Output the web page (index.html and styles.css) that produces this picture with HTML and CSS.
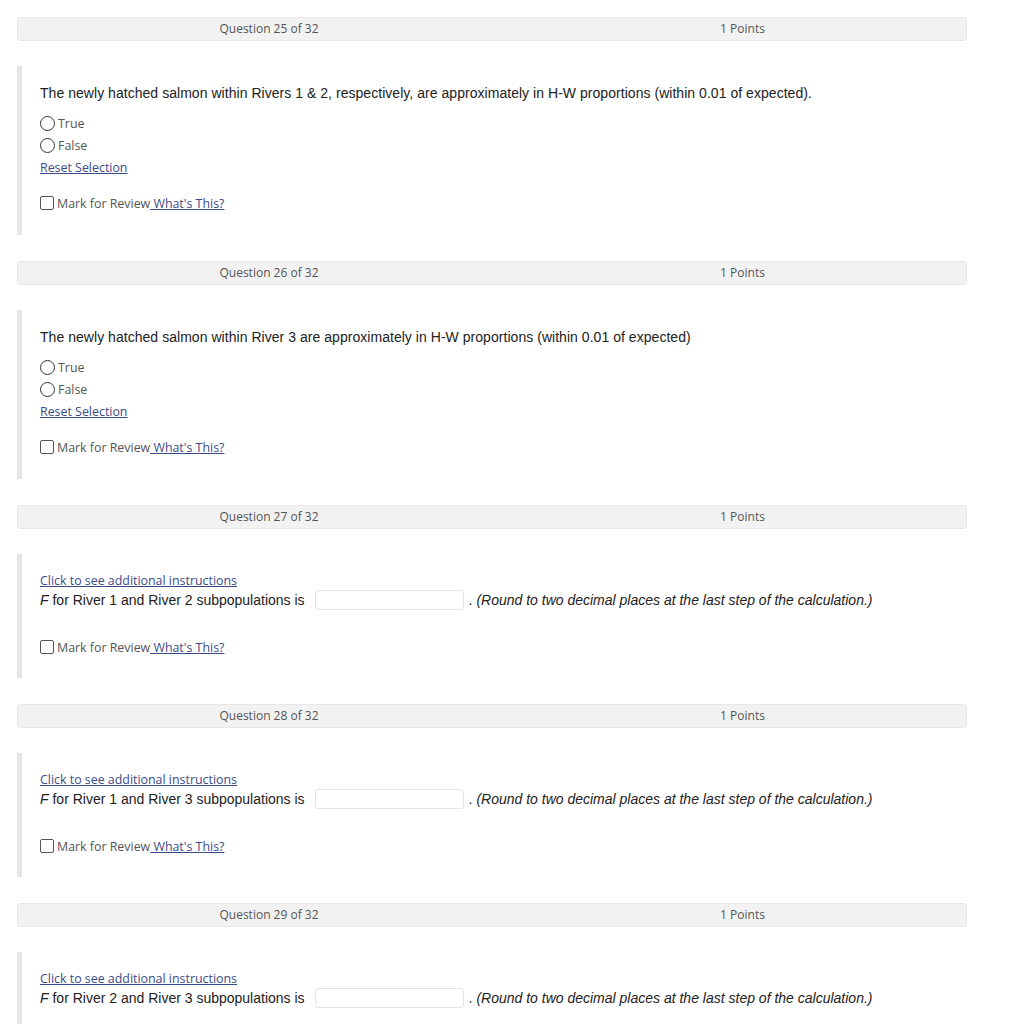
FILE: index.html
```html
<!DOCTYPE html>
<html lang="en">
<head>
    <meta charset="UTF-8">
    <title>Quiz</title>
    <link rel="stylesheet" href="styles.css">
</head>
<body>
    <div class="quiz">

        <div class="question">
            <div class="q-header">
                <span>Question 25 of 32</span>
                <span>1 Points</span>
            </div>
            <div class="q-body">
                <p class="q-text">The newly hatched salmon within Rivers 1 &amp; 2, respectively, are approximately in H-W proportions (within 0.01 of expected).</p>
                <label class="choice"><span class="radio"></span>True</label>
                <label class="choice"><span class="radio"></span>False</label>
                <a href="#" class="link reset">Reset Selection</a>
                <div class="review"><span class="check"></span>Mark for Review<a href="#" class="link"> What's This?</a></div>
            </div>
        </div>

        <div class="question">
            <div class="q-header">
                <span>Question 26 of 32</span>
                <span>1 Points</span>
            </div>
            <div class="q-body">
                <p class="q-text">The newly hatched salmon within River 3 are approximately in H-W proportions (within 0.01 of expected)</p>
                <label class="choice"><span class="radio"></span>True</label>
                <label class="choice"><span class="radio"></span>False</label>
                <a href="#" class="link reset">Reset Selection</a>
                <div class="review"><span class="check"></span>Mark for Review<a href="#" class="link"> What's This?</a></div>
            </div>
        </div>

        <div class="question">
            <div class="q-header">
                <span>Question 27 of 32</span>
                <span>1 Points</span>
            </div>
            <div class="q-body short">
                <a href="#" class="link instr">Click to see additional instructions</a>
                <div class="fill">
                    <span><i>F</i> for River 1 and River 2 subpopulations is</span>
                    <input type="text" class="answer">
                    <span class="hint">. <i>(Round to two decimal places at the last step of the calculation.)</i></span>
                </div>
                <div class="review"><span class="check"></span>Mark for Review<a href="#" class="link"> What's This?</a></div>
            </div>
        </div>

        <div class="question">
            <div class="q-header">
                <span>Question 28 of 32</span>
                <span>1 Points</span>
            </div>
            <div class="q-body short">
                <a href="#" class="link instr">Click to see additional instructions</a>
                <div class="fill">
                    <span><i>F</i> for River 1 and River 3 subpopulations is</span>
                    <input type="text" class="answer">
                    <span class="hint">. <i>(Round to two decimal places at the last step of the calculation.)</i></span>
                </div>
                <div class="review"><span class="check"></span>Mark for Review<a href="#" class="link"> What's This?</a></div>
            </div>
        </div>

        <div class="question">
            <div class="q-header">
                <span>Question 29 of 32</span>
                <span>1 Points</span>
            </div>
            <div class="q-body short">
                <a href="#" class="link instr">Click to see additional instructions</a>
                <div class="fill">
                    <span><i>F</i> for River 2 and River 3 subpopulations is</span>
                    <input type="text" class="answer">
                    <span class="hint">. <i>(Round to two decimal places at the last step of the calculation.)</i></span>
                </div>
                <div class="review"><span class="check"></span>Mark for Review<a href="#" class="link"> What's This?</a></div>
            </div>
        </div>

    </div>
</body>
</html>
```

FILE: styles.css
```css
body {
    margin: 0;
    background: #fff;
    font-family: "Open Sans", sans-serif;
    font-size: 12.4px;
    color: #555;
}
.quiz {
    width: 950px;
    padding: 17px 0 0 17px;
}
.question {
    margin-bottom: 26px;
}
.q-header {
    display: grid;
    grid-template-columns: 502px 1fr;
    height: 22px;
    line-height: 22px;
    padding-right: 1px;
    background: #f2f2f2;
    border: 1px solid #e8e8e8;
    border-radius: 3px;
    text-align: center;
    font-size: 12px;
    color: #555;
}
.q-body {
    margin-top: 25px;
    border-left: 5px solid #e6e6e6;
    padding: 18px 0 21px 18px;
}
.q-body.short {
    padding-bottom: 20px;
}
.q-text {
    margin: 0 0 10px;
    font-family: "Liberation Sans", Arial, sans-serif;
    font-size: 14px;
    line-height: 18px;
    letter-spacing: 0.04px;
    color: #222;
}
.choice {
    display: flex;
    align-items: center;
    height: 22px;
    color: #555;
}
.radio {
    width: 13px;
    height: 13px;
    border: 1px solid #333;
    border-radius: 50%;
    margin-right: 3px;
}
.link {
    color: #3b4a88;
    text-decoration: underline;
}
.reset {
    display: block;
    line-height: 23px;
    margin-bottom: 13px;
}
.review {
    display: flex;
    align-items: center;
    height: 22px;
    white-space: pre;
}
.check {
    width: 12px;
    height: 12px;
    border: 1px solid #555;
    border-radius: 2px;
    margin-right: 3px;
}
.instr {
    display: block;
    line-height: 18px;
}
.fill {
    display: flex;
    align-items: center;
    height: 20px;
    margin-bottom: 26px;
    font-family: "Liberation Sans", Arial, sans-serif;
    font-size: 14px;
    color: #222;
}
.answer {
    width: 147px;
    height: 18px;
    margin: 0 5px 0 10px;
    padding: 0;
    border: 1px solid #e5e5e5;
    border-radius: 3px;
}
```
